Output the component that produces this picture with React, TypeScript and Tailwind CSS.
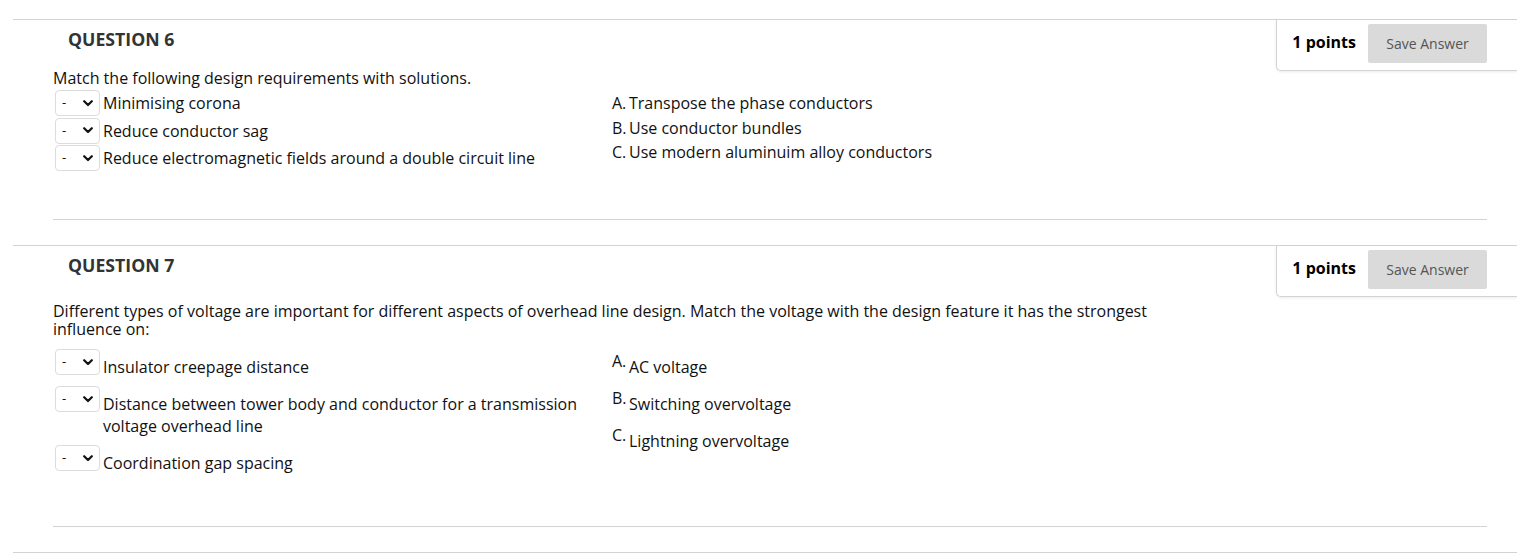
import React from 'react'

type Row = { text: string }

function Chevron() {
  return (
    <svg width="10" height="7" viewBox="0 0 10 7" className="block">
      <polyline points="1.2,1.2 5,5 8.8,1.2" fill="none" stroke="#111" strokeWidth="2.2" strokeLinecap="round" strokeLinejoin="round" />
    </svg>
  )
}

function Picker() {
  return (
    <div className="ml-[2px] mr-[3px] flex h-[26px] w-[45px] shrink-0 items-center justify-between rounded-[4px] border border-[#dcdcdc] bg-white pl-[6px] pr-[6px] text-[13px] text-[#111]">
      <span>-</span>
      <Chevron />
    </div>
  )
}

function Header({ num }: { num: number }) {
  return (
    <div className="flex h-[50px] items-start justify-between">
      <h2 className="pl-[55px] pt-[7px] text-[17.7px] font-bold leading-[24px] text-[#333]">QUESTION {num}</h2>
      <div className="relative z-10 flex items-center rounded-bl-[5px] border-b border-l border-[#d3d3d3] bg-white pb-[7px] pl-[15px] pr-[30px] pt-[4px] shadow-[0_1px_3px_rgba(0,0,0,0.08)]">
        <span className="mb-[3px] text-[16px] font-bold text-black">1 points</span>
        <button className="ml-[12px] h-[39px] w-[119px] rounded-[2px] bg-[#dadada] text-[14px] text-[#555]">Save Answer</button>
      </div>
    </div>
  )
}

const q6Left: Row[] = [
  { text: 'Minimising corona' },
  { text: 'Reduce conductor sag' },
  { text: 'Reduce electromagnetic fields around a double circuit line' },
]
const q6Right = ['Transpose the phase conductors', 'Use conductor bundles', 'Use modern aluminuim alloy conductors']

const q7Left: Row[] = [
  { text: 'Insulator creepage distance' },
  { text: 'Distance between tower body and conductor for a transmission voltage overhead line' },
  { text: 'Coordination gap spacing' },
]
const q7Right = ['AC voltage', 'Switching overvoltage', 'Lightning overvoltage']
const letters = ['A.', 'B.', 'C.']

export default function App() {
  return (
    <div className="min-h-screen w-[1517px] bg-white pt-[19px] font-['Open_Sans',sans-serif] text-[#111]">
      {/* Question 6 */}
      <section className="mb-[25px] ml-[13px] border-t border-[#d3d3d3]">
        <Header num={6} />
        <div className="ml-[40px] mr-[30px] border-b border-[#d3d3d3] pb-[48px]">
          <p className="-mt-[1px] text-[16px] leading-[18px]">Match the following design requirements with solutions.</p>
          <div className="mt-[3px] flex">
            <div className="flex w-[559px] flex-col gap-[1.5px]">
              {q6Left.map((r) => (
                <div key={r.text} className="flex items-center">
                  <Picker />
                  <span className="text-[16px] leading-[22px]">{r.text}</span>
                </div>
              ))}
            </div>
            <div className="flex flex-col pt-[1px] text-[16px] leading-[24.5px]">
              {q6Right.map((t, i) => (
                <div key={t} className="flex">
                  <span className="w-[17px] shrink-0">{letters[i]}</span>
                  <span>{t}</span>
                </div>
              ))}
            </div>
          </div>
        </div>
      </section>

      {/* Question 7 */}
      <section className="mb-[25px] ml-[13px] border-t border-[#d3d3d3]">
        <Header num={7} />
        <div className="ml-[40px] mr-[30px] border-b border-[#d3d3d3] pb-[52px]">
          <p className="w-[1150px] pt-[6px] text-[16px] leading-[18px]">
            Different types of voltage are important for different aspects of overhead line design. Match the voltage with the design feature it has the strongest influence on:
          </p>
          <div className="mt-[11px] flex">
            <div className="flex w-[559px] flex-col gap-[8px] pr-[10px]">
              {q7Left.map((r) => (
                <div key={r.text} className="flex items-start">
                  <Picker />
                  <span className="pt-[7px] text-[16px] leading-[22px]">{r.text}</span>
                </div>
              ))}
            </div>
            <div className="flex flex-col gap-[8px]">
              {q7Right.map((t, i) => (
                <div key={t} className="flex items-start">
                  <span className="mt-[3px] w-[17px] shrink-0 text-[16px] leading-[18px]">{letters[i]}</span>
                  <span className="pt-[7px] text-[16px] leading-[22px]">{t}</span>
                </div>
              ))}
            </div>
          </div>
        </div>
      </section>

      <div className="ml-[13px] border-t border-[#d3d3d3]" />
    </div>
  )
}
